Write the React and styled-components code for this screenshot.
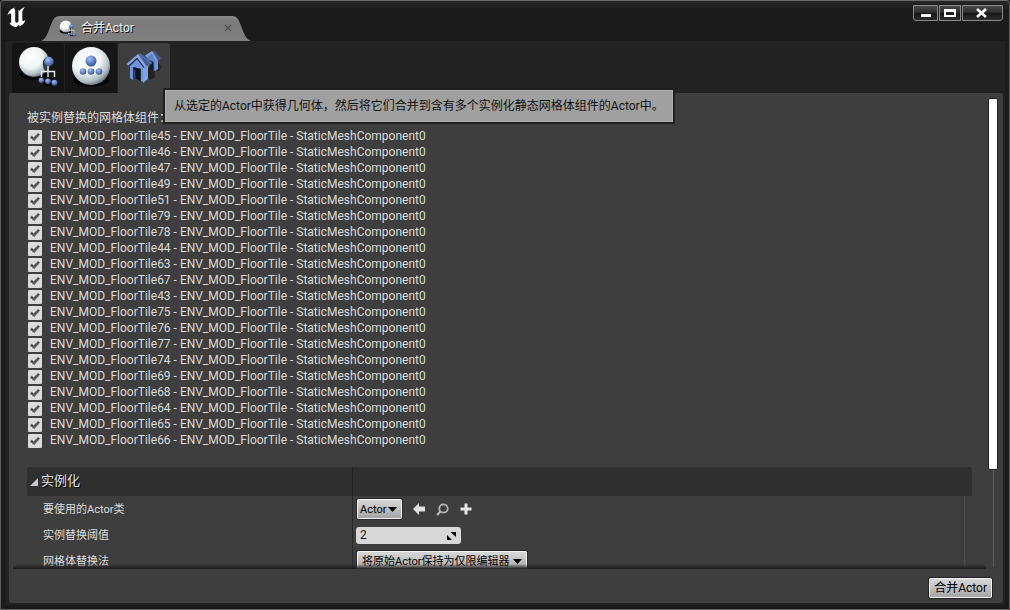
import React, { useState } from 'react';
import styled, { createGlobalStyle } from 'styled-components';

const GlobalStyle = createGlobalStyle`
  *, *::before, *::after { box-sizing: border-box; }
  body { margin: 0; background: #1b1b1b; }
  button, input, select { font-family: inherit; margin: 0; }
`;

const Window = styled.div`
  position: relative;
  display: flex;
  flex-direction: column;
  height: 100vh;
  padding: 0 4px 4px;
  border: 1px solid #5c5c5c;
  border-top-color: #6a6a6a;
  border-radius: 4px 4px 0 0;
  background: linear-gradient(#262626 0, #1b1b1b 10px);
  color: #dcdcdc;
  font: 12px/16px Roboto, "Noto Sans CJK SC", sans-serif;
`;

const TitleBar = styled.header`
  display: flex;
  align-items: flex-start;
  height: 40px;
  flex: none;
`;

const Logo = styled.svg`
  margin: 5px 15px 0 2px;
  flex: none;
`;

const Tab = styled.div`
  position: relative;
  display: flex;
  align-items: center;
  width: 210px;
  height: 25px;
  margin-top: 15px;
  padding: 0 19px 0 18px;
  font-size: 12px;
  color: #f0f0f0;
  text-shadow: 1px 1px 0 #111;
`;

const TabShape = styled.svg`
  position: absolute;
  inset: 0;
`;

const TabLabel = styled.span`
  position: relative;
  flex: 1;
  margin-left: 5px;
  padding-bottom: 2px;
`;

const TabIcon = styled.svg`
  position: relative;
`;

const TabClose = styled.button`
  position: relative;
  display: flex;
  padding: 0 0 1px;
  border: 0;
  background: none;
`;

const WindowButtons = styled.div`
  display: flex;
  gap: 1px;
  margin: 4px 2px 0 auto;
`;

const WindowButton = styled.button`
  display: grid;
  place-items: center;
  width: ${(p) => p.$width}px;
  height: 16px;
  padding: 0;
  border: 1px solid #8a8a8a;
  border-radius: ${(p) => p.$radius || '0'};
  background: linear-gradient(#4a4a4a, #2a2a2a 50%, #161616 51%, #2c2c2c);
`;

const WorkArea = styled.div`
  display: flex;
  flex-direction: column;
  flex: 1;
  min-height: 0;
  padding: 2px 2px 2px 4px;
  background: #222;
`;

const ToolBar = styled.nav`
  display: flex;
  gap: 1px;
  flex: none;
  padding-left: 3px;
`;

const ToolButton = styled.button`
  display: grid;
  place-items: center;
  width: 52px;
  height: 50px;
  padding: 0 0 2px;
  border: 0;
  border-radius: 3px 3px 0 0;
  background: ${(p) => (p.$active ? '#3e3e3e' : '#151515')};
`;

const Panel = styled.main`
  display: flex;
  flex-direction: column;
  flex: 1;
  min-height: 0;
  border-radius: 3px;
  background: #3e3e3e;
`;

const ScrollArea = styled.div`
  display: flex;
  flex: 1;
  min-height: 0;
  overflow: hidden;
`;

const Content = styled.div`
  position: relative;
  flex: 1;
  margin: 0 2px 0 4px;
  padding: 16px 14px 0;
  overflow: hidden;
  &::after {
    content: '';
    position: absolute;
    inset: auto 0 0;
    height: 5px;
    background: linear-gradient(transparent, #1c1c1c);
    border-radius: 4px 4px 0 0;
  }
`;

const ScrollBar = styled.div`
  display: flex;
  flex-direction: column;
  align-items: center;
  width: 10px;
  margin: 5px 5px 2px 0;
`;

const ScrollThumb = styled.div`
  width: 10px;
  height: 372px;
  flex: none;
  border: 1px solid #222;
  border-radius: 2px;
  background: #fff;
`;

const ScrollTrack = styled.div`
  width: 1px;
  flex: 1;
  margin-left: 1px;
  background: #5a5a5a;
`;

const ListTitle = styled.h2`
  margin: 0 0 2px;
  font-size: 12px;
  font-weight: 400;
  line-height: 18px;
`;

const List = styled.ul`
  margin: 0 0 18px;
  padding: 0;
  list-style: none;
`;

const ListItem = styled.label`
  display: flex;
  align-items: center;
  gap: 8px;
  height: 16px;
  padding-left: 1px;
  line-height: 14px;
  span { height: 16px; }
`;

const CheckBox = styled.input`
  appearance: none;
  display: grid;
  place-items: center;
  width: 14px;
  height: 14px;
  border-radius: 1px;
  background: #dadada;
  &:checked::after {
    content: '';
    width: 10px;
    height: 8px;
    background: #555;
    clip-path: polygon(0 55%, 18% 35%, 38% 55%, 80% 0, 100% 20%, 42% 100%);
  }
`;

const SectionHeader = styled.div`
  display: grid;
  grid-template-columns: 326px 1fr;
  height: 29px;
  padding-right: 7px;
  border-radius: 3px 3px 0 0;
  background: #2f2f2f;
`;

const SectionToggle = styled.button`
  display: flex;
  align-items: center;
  gap: 3px;
  padding: 0 0 4px 3px;
  border: 0;
  border-right: 1px solid #222;
  background: none;
  color: #e4e4e4;
  font-size: 13px;
  text-align: left;
  text-shadow: 1px 1px 0 #000;
  svg { margin-top: 4px; }
`;

const Property = styled.div`
  display: grid;
  grid-template-columns: 326px 1fr;
  grid-template-rows: 26px;
  height: 26px;
  padding-right: 7px;
  font-size: 11px;
`;

const PropertyName = styled.label`
  padding-left: 16px;
  border-right: 1px solid #2a2a2a;
  line-height: 28px;
`;

const PropertyValue = styled.div`
  display: flex;
  align-items: center;
  padding-left: 3px;
  border-right: 1px solid #4a4a4a;
`;

const SelectBox = styled.span`
  position: relative;
  display: inline-flex;
  margin-left: 1px;
  svg { position: absolute; right: 5px; top: 8px; pointer-events: none; }
`;

const Select = styled.select`
  appearance: none;
  height: 20px;
  padding: ${(p) => (p.$compact ? '0 14px 0 2px' : '0 16px 0 4px')};
  border: 1px solid #f2f2f2;
  border-radius: 1px;
  outline: 1px solid #2a2a2a;
  background: linear-gradient(#d8d8d8, #a4a4a4);
  color: #000;
  font-size: 11px;
`;

const IconButton = styled.button`
  display: flex;
  padding: 0;
  border: 0;
  background: none;
  margin-left: 11px;
`;

const NumberBox = styled.span`
  position: relative;
  display: inline-flex;
  svg { position: absolute; right: 5px; top: 5px; pointer-events: none; }
`;

const NumberInput = styled.input`
  width: 105px;
  height: 17px;
  padding: 0 4px;
  border: 0;
  border-radius: 3px;
  background: #d8d8d8;
  color: #111;
  font-size: 12px;
`;

const Footer = styled.footer`
  display: flex;
  justify-content: flex-end;
  flex: none;
  height: 34px;
  padding: 9px 11px 0 0;
`;

const MergeButton = styled.button`
  height: 20px;
  padding: 0 4px;
  border: 1px solid #f2f2f2;
  border-radius: 1px;
  outline: 1px solid #222;
  background: linear-gradient(#d8d8d8, #a6a6a6);
  color: #000;
  font-size: 12px;
  line-height: 18px;
`;

const Tooltip = styled.div`
  position: absolute;
  left: 164px;
  top: 89px;
  padding: 7px 8px;
  border: 1px solid #aeaeae;
  outline: 2px solid #1f1f1f;
  background: #a0a0a0;
  color: #111;
  line-height: 16px;
  white-space: nowrap;
`;

const Defs = () => (
  <svg width="0" height="0" style={{ position: 'absolute' }} aria-hidden="true">
    <defs>
      <radialGradient id="white" cx="38%" cy="32%" r="70%">
        <stop offset="0" stopColor="#fff" />
        <stop offset=".55" stopColor="#f0f4f4" />
        <stop offset=".85" stopColor="#aebbc2" />
        <stop offset="1" stopColor="#6f7c86" />
      </radialGradient>
      <radialGradient id="blue" cx="38%" cy="30%" r="70%">
        <stop offset="0" stopColor="#a9c0f2" />
        <stop offset=".5" stopColor="#6c8bcd" />
        <stop offset="1" stopColor="#3a5590" />
      </radialGradient>
      <linearGradient id="tab" x1="0" y1="0" x2="0" y2="1">
        <stop offset="0" stopColor="#8a8a8a" />
        <stop offset=".2" stopColor="#7b7b7b" />
        <stop offset="1" stopColor="#808080" />
      </linearGradient>
    </defs>
  </svg>
);

const MergeShapes = () => (
  <>
    <ellipse cx="17" cy="28" rx="15" ry="6" fill="#050505" />
    <circle cx="17" cy="16" r="15" fill="url(#white)" />
    <path d="M26 15q2-4 6-5l1 11-3 6q-5-4-4-12z" fill="#333d48" />
    <circle cx="32" cy="15.500" r="4.700" fill="url(#blue)" />
    <path d="M31 20v5.500M24.500 31v-5.500H37.500V31M31 24v7" fill="none" stroke="#e8edf0" strokeWidth="1.4" />
    <ellipse cx="34" cy="38" rx="8" ry="2" fill="#050505" />
    <circle cx="24.300" cy="34.300" r="2.700" fill="url(#blue)" />
    <circle cx="31" cy="35.300" r="2.800" fill="url(#blue)" />
    <circle cx="37.500" cy="36.700" r="3" fill="url(#blue)" />
  </>
);

const ProxyIcon = () => (
  <svg width="42" height="42" viewBox="0 0 42 42">
    <ellipse cx="21" cy="34" rx="18" ry="7" fill="#050505" />
    <circle cx="21" cy="20" r="19" fill="url(#white)" />
    <circle cx="21" cy="15" r="5.500" fill="url(#blue)" />
    <circle cx="13" cy="25.500" r="3.300" fill="url(#blue)" />
    <circle cx="21" cy="25.500" r="3.300" fill="url(#blue)" />
    <circle cx="29" cy="25.500" r="3.300" fill="url(#blue)" />
  </svg>
);

const HousesIcon = () => (
  <svg width="38" height="34" viewBox="0 0 38 34">
    <path d="M23 18l6-2 1 11-4 3-3-2z" fill="#232323" />
    <path d="M32 12l5 4-2 5h-5z" fill="#2b2b2b" />
    <path d="M22 8l4-4 5 5v12l-2.500-.5v-6l-2.500-2v5l-4-2z" fill="#5f83c6" />
    <path d="M24.500 10l4 2v8.500l-4-3z" fill="#10182c" />
    <path d="M30 11l3-2v10l-3 2z" fill="#7397dc" />
    <path d="M27 1h2l7 7-1.500 2-3 .5z" fill="#46608f" />
    <path d="M20 5.500L27 1l5.500 9-1.500 1.500L26.500 4 22 8z" fill="#7c9ee0" />
    <path d="M5 14l7-7 7 9v16l-3-1V19l-8-2v13l-3-2z" fill="#6e96de" />
    <path d="M8.500 17l7 2v12l-4-2-3-1z" fill="#0c1222" />
    <path d="M8.500 19l2 1v9l-2-1z" fill="#2c3f6c" />
    <path d="M18 18l5-3v14l-5 4z" fill="#7fa4ea" />
    <path d="M13 4l3-.5L27.500 12.500l-1.500 2-6 2.500z" fill="#46608f" />
    <path d="M14.500 4l12 9.500" stroke="#6b8bcb" strokeWidth=".7" />
    <path d="M1.500 14L13 4l8.500 12-2 1.500L12 8l-8.500 7.500z" fill="#86a8ea" />
    <path d="M4.500 15.500L12 8.500l7 9" fill="none" stroke="#1d2a4a" strokeWidth="1.200" />
  </svg>
);

const Caret = () => (
  <svg width="9" height="5" viewBox="0 0 9 5"><path d="M0 0h9L4.500 5z" fill="#000" /></svg>
);

const numbers = [45, 46, 47, 49, 51, 79, 78, 44, 63, 67, 43, 75, 76, 77, 74, 69, 68, 64, 65, 66];

const tools = [
  { name: '合并', icon: <svg width="42" height="42" viewBox="0 0 42 42"><MergeShapes /></svg> },
  { name: '代理', icon: <ProxyIcon /> },
  { name: '实例化', icon: <HousesIcon /> },
];

export default function App() {
  const [tool, setTool] = useState(2);
  return (
    <Window>
      <GlobalStyle />
      <Defs />
      <TitleBar>
        <Logo width="19" height="22" viewBox="0 0 19 22">
          <path
            fill="#fff"
            d="M8 1.500C4.500 2.500 1.500 5 .5 9.500c1-1.500 2-2 2.700-2 .8 0 1 .6 1 1.500v6.500c0 1-.6 1.700-1.700 1.700 1.500 2.300 4 3.600 7 3.800l2-2 1.700 1.200c2.500-1.200 4.500-3.400 5.300-6.700-1 1-1.700 1.500-2.300 1.500-.7 0-.9-.5-.9-1.200V6c.2-1.500 1.300-3.500 2.700-4.800-2.500.6-4.500 2-5.700 3.800L10.500 4c.7.700 1 1.300 1 2.200v8.300c0 1.300-.7 2.200-1.700 2.200s-1.600-.6-1.600-1.700V5c0-1.200-.4-1.800-1.200-1.900z"
          />
        </Logo>
        <Tab>
          <TabShape width="210" height="25" viewBox="0 0 210 25">
            <path d="M0 25C8 23 9 4 15 1q2-1 4-1h173q3 0 5 3c5 9 6 20 13 22z" fill="url(#tab)" />
          </TabShape>
          <TabIcon width="17" height="17" viewBox="0 0 42 42"><MergeShapes /></TabIcon>
          <TabLabel>合并Actor</TabLabel>
          <TabClose aria-label="关闭标签页">
            <svg width="8" height="8" viewBox="0 0 8 8"><path d="M1 1l6 6M7 1L1 7" stroke="#505050" strokeWidth="1.200" /></svg>
          </TabClose>
        </Tab>
        <WindowButtons>
          <WindowButton $width={25} $radius="0 0 0 3px" aria-label="最小化">
            <svg width="10" height="9"><path d="M0 5h10v3H0z" fill="#fff" /></svg>
          </WindowButton>
          <WindowButton $width={22} aria-label="最大化">
            <svg width="12" height="8"><path fillRule="evenodd" d="M0 0h12v8H0zM2 3v3h8V3z" fill="#fff" /></svg>
          </WindowButton>
          <WindowButton $width={41} $radius="0 0 3px 0" aria-label="关闭">
            <svg width="14" height="10" viewBox="0 0 14 10"><path d="M1 1l9 8M10 1L1 9" stroke="#fff" strokeWidth="2.600" /></svg>
          </WindowButton>
        </WindowButtons>
      </TitleBar>
      <WorkArea>
        <ToolBar>
          {tools.map((t, i) => (
            <ToolButton key={t.name} aria-label={t.name} $active={i === tool} onClick={() => setTool(i)}>
              {t.icon}
            </ToolButton>
          ))}
        </ToolBar>
        <Panel>
          <ScrollArea>
            <Content>
              <ListTitle>被实例替换的网格体组件：</ListTitle>
              <List>
                {numbers.map((n) => (
                  <li key={n}>
                    <ListItem>
                      <CheckBox type="checkbox" defaultChecked />
                      <span>ENV_MOD_FloorTile{n} - ENV_MOD_FloorTile - StaticMeshComponent0</span>
                    </ListItem>
                  </li>
                ))}
              </List>
              <SectionHeader>
                <SectionToggle>
                  <svg width="8" height="8" viewBox="0 0 8 8"><path d="M8 0v8H0z" fill="#c8c8c8" /></svg>
                  实例化
                </SectionToggle>
              </SectionHeader>
              <Property>
                <PropertyName htmlFor="actor-class">要使用的Actor类</PropertyName>
                <PropertyValue>
                  <SelectBox>
                    <Select $compact id="actor-class"><option>Actor</option></Select>
                    <Caret />
                  </SelectBox>
                  <IconButton aria-label="使用所选">
                    <svg width="12" height="12" viewBox="0 0 12 12"><path d="M0 6l6-6v3.500h6v5H6V12z" fill="#e0e0e0" /></svg>
                  </IconButton>
                  <IconButton aria-label="浏览">
                    <svg width="13" height="13" viewBox="0 0 13 13">
                      <circle cx="7.500" cy="5.500" r="4.200" fill="none" stroke="#b8b8b8" strokeWidth="1.800" />
                      <path d="M4.500 8.500L1 12" stroke="#b8b8b8" strokeWidth="2.200" />
                    </svg>
                  </IconButton>
                  <IconButton aria-label="新建">
                    <svg width="12" height="12" viewBox="0 0 12 12"><path d="M4.500.5h3v4h4v3h-4v4h-3v-4h-4v-3h4z" fill="#e6e6e6" /></svg>
                  </IconButton>
                </PropertyValue>
              </Property>
              <Property>
                <PropertyName htmlFor="threshold">实例替换阈值</PropertyName>
                <PropertyValue>
                  <NumberBox>
                    <NumberInput id="threshold" type="text" inputMode="numeric" defaultValue="2" />
                    <svg width="9" height="8" viewBox="0 0 9 8"><path d="M3.500 0H9v5zM0 3l5 5H0z" fill="#000" /></svg>
                  </NumberBox>
                </PropertyValue>
              </Property>
              <Property>
                <PropertyName htmlFor="replace-method">网格体替换法</PropertyName>
                <PropertyValue>
                  <SelectBox>
                    <Select id="replace-method"><option>将原始Actor保持为仅限编辑器</option></Select>
                    <Caret />
                  </SelectBox>
                </PropertyValue>
              </Property>
            </Content>
            <ScrollBar>
              <ScrollThumb />
              <ScrollTrack />
            </ScrollBar>
          </ScrollArea>
          <Footer>
            <MergeButton>合并Actor</MergeButton>
          </Footer>
        </Panel>
      </WorkArea>
      <Tooltip role="tooltip">
        从选定的Actor中获得几何体，然后将它们合并到含有多个实例化静态网格体组件的Actor中。
      </Tooltip>
    </Window>
  );
}
